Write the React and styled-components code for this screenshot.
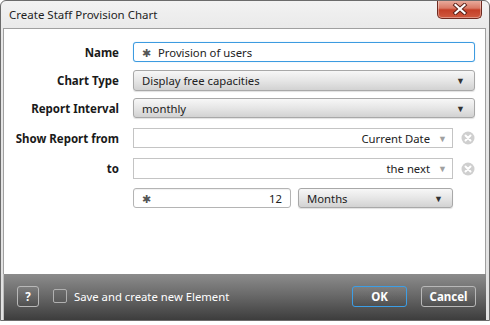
import React from "react";
import styled, { createGlobalStyle } from "styled-components";

const GlobalStyle = createGlobalStyle`
  html, body { margin: 0; padding: 0; background: #ffffff; }
  body { font-family: "Segoe UI", "Noto Sans", "Open Sans", sans-serif; }
  * { box-sizing: border-box; }
`;

const Window = styled.div`
  width: 490px;
  height: 321px;
  display: flex;
  flex-direction: column;
  border: 1px solid #6b6b6b;
  border-radius: 6px 6px 0 0;
  background: linear-gradient(#f2f2f2, #e6e6e6 40px, #e2e2e2);
  padding: 0 3px 0 2px;
  overflow: hidden;
`;

const TitleBar = styled.div`
  height: 27px;
  display: flex;
  align-items: flex-start;
  justify-content: space-between;
  padding-left: 6px;
`;

const Title = styled.div`
  font-size: 11.5px;
  color: #1e1e1e;
  line-height: 27px;
`;

const CloseButton = styled.div`
  width: 45px;
  height: 19px;
  margin-top: -1px;
  margin-right: 4px;
  border: 1px solid #6e2a20;
  border-top: none;
  border-radius: 0 0 5px 5px;
  background: linear-gradient(#eab0a2 0%, #d97a66 45%, #c43f27 55%, #cf5a40 100%);
  box-shadow: inset 0 0 0 1px rgba(255, 255, 255, 0.35);
  display: flex;
  align-items: center;
  justify-content: center;
`;

const Body = styled.div`
  flex: 1;
  background: #ffffff;
  border: 1px solid #a0a0a0;
  border-bottom: none;
  padding: 13px 9px 0 0;
`;

const Form = styled.div`
  display: grid;
  grid-template-columns: 115px 342px;
  column-gap: 14px;
  align-items: center;
`;

const Label = styled.div`
  font-size: 11.5px;
  font-weight: 700;
  color: #1a1a1a;
  text-align: right;
  margin-top: ${(p) => p.$mt || 0}px;
`;

const Field = styled.div`
  display: flex;
  align-items: center;
  gap: ${(p) => p.$gap || 0}px;
  margin-top: ${(p) => p.$mt || 0}px;
`;

const TextInput = styled.div`
  height: ${(p) => p.$h || 20}px;
  width: ${(p) => (p.$w ? `${p.$w}px` : "100%")};
  border: 1px solid ${(p) => (p.$focus ? "#3d9be0" : "#b4b4b4")};
  border-radius: 3px;
  background: #ffffff;
  display: flex;
  align-items: center;
  padding: 0 8px 0 8px;
  font-size: 11.3px;
  color: #222;
  box-shadow: ${(p) => (p.$focus ? "0 0 1px #8cc6f0" : "inset 0 1px 1px rgba(0,0,0,0.06)")};
`;

const Star = styled.span`
  color: #555;
  font-size: 11px;
  width: 16px;
  flex: none;
`;

const InputText = styled.span`
  flex: 1;
  text-align: ${(p) => (p.$right ? "right" : "left")};
  white-space: nowrap;
`;

const Select = styled.div`
  height: ${(p) => p.$h || 20}px;
  width: ${(p) => (p.$w ? `${p.$w}px` : "100%")};
  border: 1px solid #a8a8a8;
  border-radius: 3px;
  background: linear-gradient(#f7f7f7, #e6e6e6 50%, #d2d2d2);
  display: flex;
  align-items: center;
  justify-content: space-between;
  padding: 0 9px 0 8px;
  font-size: 11.3px;
  color: #222;
  box-shadow: 0 1px 1px rgba(0, 0, 0, 0.12);
`;

const Arrow = styled.span`
  font-size: 9px;
  color: ${(p) => (p.$light ? "#a0a0a0" : "#333")};
  margin-left: ${(p) => (p.$light ? 8 : 0)}px;
  margin-right: ${(p) => (p.$light ? -3 : 0)}px;
`;

const Combo = styled.div`
  height: ${(p) => p.$h || 20}px;
  width: 320px;
  border: 1px solid #c4c4c4;
  background: #ffffff;
  display: flex;
  align-items: center;
  justify-content: flex-end;
  padding: 0 8px;
  font-size: 11.3px;
  color: #222;
`;

const ClearIcon = () => (
  <svg width="14" height="14" viewBox="0 0 14 14">
    <circle cx="7" cy="7" r="6.5" fill="#cfcfcf" />
    <path d="M4.5 4.5 L9.5 9.5 M9.5 4.5 L4.5 9.5" stroke="#fff" strokeWidth="2" strokeLinecap="round" />
  </svg>
);

const CloseX = () => (
  <svg width="16" height="12" viewBox="0 0 16 12">
    <path d="M3.5 2 L12.5 10 M12.5 2 L3.5 10" stroke="#5a2018" strokeWidth="4" strokeLinecap="square" />
    <path d="M3.5 2 L12.5 10 M12.5 2 L3.5 10" stroke="#ffffff" strokeWidth="2.2" strokeLinecap="square" />
  </svg>
);

const Footer = styled.div`
  height: 46px;
  background: linear-gradient(#8c8c8c, #6a6a6a 45%, #3d3d3d);
  display: flex;
  align-items: center;
  padding: 0 10px 2px 13px;
  border-left: 1px solid #bdbdbd;
`;

const FooterButton = styled.div`
  height: 21px;
  min-width: ${(p) => p.$w}px;
  border: 1px solid ${(p) => (p.$primary ? "#3c9ee6" : "#b8b8b8")};
  border-radius: 3px;
  display: flex;
  align-items: center;
  justify-content: center;
  font-size: 11.5px;
  font-weight: 700;
  color: #ffffff;
  background: linear-gradient(rgba(255,255,255,0.05), rgba(0,0,0,0.08));
  margin-left: ${(p) => p.$ml || 0}px;
`;

const CheckRow = styled.label`
  display: flex;
  align-items: center;
  gap: 7px;
  margin-left: 14px;
  font-size: 11.3px;
  color: #ffffff;
  flex: 1;
`;

const Checkbox = styled.span`
  width: 14px;
  height: 14px;
  border: 1px solid #b0b0b0;
  border-radius: 2px;
  background: linear-gradient(#6e6e6e, #5a5a5a);
`;

export default function App() {
  return (
    <>
      <GlobalStyle />
      <Window>
        <TitleBar>
          <Title>Create Staff Provision Chart</Title>
          <CloseButton>
            <CloseX />
          </CloseButton>
        </TitleBar>
        <Body>
          <Form>
            <Label>Name</Label>
            <Field>
              <TextInput $focus>
                <Star>✱</Star>
                <InputText>Provision of users</InputText>
              </TextInput>
            </Field>

            <Label $mt={8}>Chart Type</Label>
            <Field $mt={8}>
              <Select $h={21}>
                <span>Display free capacities</span>
                <Arrow>▼</Arrow>
              </Select>
            </Field>

            <Label $mt={7}>Report Interval</Label>
            <Field $mt={7}>
              <Select>
                <span>monthly</span>
                <Arrow>▼</Arrow>
              </Select>
            </Field>

            <Label $mt={10}>Show Report from</Label>
            <Field $mt={10} $gap={8}>
              <Combo>
                <span>Current Date</span>
                <Arrow $light>▼</Arrow>
              </Combo>
              <ClearIcon />
            </Field>

            <Label $mt={10}>to</Label>
            <Field $mt={10} $gap={8}>
              <Combo $h={21}>
                <span>the next</span>
                <Arrow $light>▼</Arrow>
              </Combo>
              <ClearIcon />
            </Field>

            <div />
            <Field $mt={9} $gap={7}>
              <TextInput $w={158}>
                <Star>✱</Star>
                <InputText $right>12</InputText>
              </TextInput>
              <Select $w={155}>
                <span>Months</span>
                <Arrow>▼</Arrow>
              </Select>
            </Field>
          </Form>
        </Body>
        <Footer>
          <FooterButton $w={22}>?</FooterButton>
          <CheckRow>
            <Checkbox />
            <span>Save and create new Element</span>
          </CheckRow>
          <FooterButton $w={55} $primary>OK</FooterButton>
          <FooterButton $w={55} $ml={14}>Cancel</FooterButton>
        </Footer>
      </Window>
    </>
  );
}
